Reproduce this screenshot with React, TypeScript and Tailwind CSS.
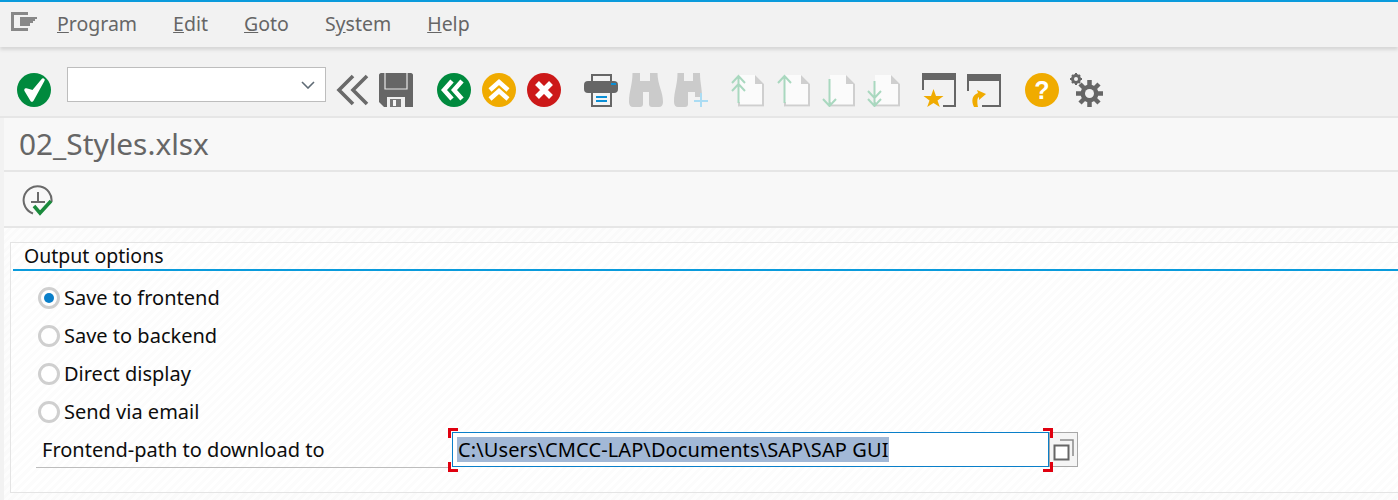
import React from "react";

const font = "font-['Noto_Sans','Open_Sans',sans-serif]";

function Svg({ children, className = "" }: { children: React.ReactNode; className?: string }) {
  return (
    <svg viewBox="0 0 34 34" className={`h-[34px] w-[34px] shrink-0 ${className}`}>
      {children}
    </svg>
  );
}

function Round({ fill, children, className }: { fill: string; children: React.ReactNode; className?: string }) {
  return (
    <Svg className={className}>
      <circle cx="17" cy="17" r="17" fill={fill} />
      {children}
    </Svg>
  );
}

const Doc = ({ children, className }: { children?: React.ReactNode; className?: string }) => (
  <Svg className={className}>
    <path d="M8 2h16l9 9v23H8z" fill="#fbfbfb" />
    <path d="M8 29v3.500h24V11" fill="none" stroke="#cfcfcf" strokeWidth="2" />
    <path d="M24 2l9 9h-9z" fill="#cfcfcf" />
    {children}
  </Svg>
);

function Toolbar() {
  const arrow = "#a9d8bf";
  return (
    <div className="flex h-[71px] items-center border-b-2 border-[#e6e6e6] pt-[14px] pl-[17px]">
      <Round fill="#008a3e" className="mt-[3px]">
        <path d="M9 17l6 10L26 7l-10 12z" fill="#fff" stroke="#fff" strokeWidth="3.500" strokeLinejoin="round" />
      </Round>
      <div className="mb-[8px] ml-4 flex h-[35px] w-[259px] items-center justify-end border border-[#bdbdbd] bg-white pr-[10px]">
        <svg viewBox="0 0 14 8" className="h-2 w-[14px]">
          <path d="M1 1l6 6 6-6" fill="none" stroke="#5f6b75" strokeWidth="1.6" />
        </svg>
      </div>
      <Svg className="mt-[3px] ml-[10px]">
        <path d="M17 3L3 17l14 14M31 3L17 17l14 14" fill="none" stroke="#6a6a6a" strokeWidth="3.6" />
      </Svg>
      <Svg className="mt-[3px] ml-[9px]">
        <path d="M0 2c0-1 1-2 2-2h30c1 0 2 1 2 2v32H5l-5-5z" fill="#666" />
        <path d="M6 0v16h22V0" fill="none" stroke="#e8e8e8" strokeWidth="1.2" />
        <path d="M8 24h18v10H8z" fill="#efefef" />
        <path d="M11 26h11v8H11z" fill="#777" />
        <path d="M14 27h3v6h-3z" fill="#f7f7f7" />
      </Svg>
      <Round fill="#008a3e" className="mt-[3px] ml-6">
        <path d="M15 8l-8 9 8 9M25 8l-8 9 8 9" fill="none" stroke="#fff" strokeWidth="4.500" />
      </Round>
      <Round fill="#f0ab00" className="mt-[3px] ml-[11px]">
        <path d="M8 17l9-8 9 8M8 26l9-8 9 8" fill="none" stroke="#fff" strokeWidth="4.500" />
      </Round>
      <Round fill="#cc1919" className="mt-[3px] ml-[11px]">
        <path d="M10 10l14 14M24 10L10 24" stroke="#fff" strokeWidth="5.500" />
      </Round>
      <Svg className="mt-[3px] ml-[23px]">
        <path d="M8 9V2h19v7" fill="none" stroke="#666" strokeWidth="2" />
        <rect x="0" y="8" width="34" height="12" rx="4" fill="#666" />
        <path d="M27 10h5v2h-5z" fill="#0a8fd6" />
        <path d="M8 20v13h19V20" fill="#f4f4f4" stroke="#666" strokeWidth="2" />
        <path d="M12 23h11v2H12zM12 27h11v2H12z" fill="#0a8fd6" />
      </Svg>
      <Svg className="mt-[3px] ml-[11px]">
        <path d="M3.500 0H11v8h10V0h7.500c0 12 5.500 18 5.500 29 0 3-1.500 5-4 5H23c-2 0-3-1-3-3V19h-6v12c0 2-1 3-3 3H4c-2.500 0-4-2-4-5C0 18 3.500 12 3.500 0z" fill="#cbcbcb" />
      </Svg>
      <Svg className="mt-[3px] ml-[11px]">
        <path d="M3.500 0H10v8h9V0h7c0 10 2 14 2 24h-7v-5h-7v12c0 2-1 3-3 3H4c-2.500 0-4-2-4-5C0 18 3.500 12 3.500 0z" fill="#cbcbcb" />
        <path d="M27 20v14M20 28h14" stroke="#abdcf3" strokeWidth="2" />
      </Svg>
      <Doc className="mt-[3px] ml-[23px]">
        <path d="M7.500 30V4M1 10l6.500-7 6.500 7M1 18l6.500-7 6.500 7" fill="none" stroke={arrow} strokeWidth="2" />
      </Doc>
      <Doc className="mt-[3px] ml-3">
        <path d="M7.500 30V3M1 10l6.500-7 6.500 7" fill="none" stroke={arrow} strokeWidth="2" />
      </Doc>
      <Doc className="mt-[3px] ml-[11px]">
        <path d="M7.500 6v27M1 26l6.500 7 6.500-7" fill="none" stroke={arrow} strokeWidth="2" />
      </Doc>
      <Doc className="mt-[3px] ml-[11px]">
        <path d="M7.500 8v25M1 18l6.500 7 6.500-7M1 26l6.500 7 6.500-7" fill="none" stroke={arrow} strokeWidth="2" />
      </Doc>
      <Svg className="mt-[3px] ml-[21px]">
        <path d="M0 0h34v7H0z" fill="#666" />
        <path d="M1 7v10M33 7v26H21" fill="none" stroke="#666" strokeWidth="2" />
        <path d="M11.500 16l2.500 7h7.500l-6 4.500 2.300 6.500-6.300-4-6.300 4 2.300-6.500-6-4.500H9z" fill="#f0ab00" />
      </Svg>
      <Svg className="mt-[3px] ml-[11px]">
        <path d="M0 1h34v7H0z" fill="#666" />
        <path d="M1 8v10M33 8v25H15" fill="none" stroke="#666" strokeWidth="2" />
        <path d="M7 34c-3-6-2-12 4-14l-1-3 9 4-7 6v-3c-2 1-2 5-1 10z" fill="#f0ab00" />
      </Svg>
      <Round fill="#f0ab00" className="mt-[3px] ml-6">
        <text x="17" y="26" textAnchor="middle" fontSize="25" fontWeight="700" fill="#fff" fontFamily="'Liberation Sans', sans-serif">?</text>
      </Round>
      <Svg className="mt-[3px] ml-[11px]">
        <circle cx="6" cy="6" r="3.500" fill="none" stroke="#666" strokeWidth="3" />
        <path d="M6 0v12M0 6h12M2 2l8 8M10 2l-8 8" stroke="#666" strokeWidth="2" />
        <circle cx="6" cy="6" r="2" fill="#f2f2f2" />
        <circle cx="19.500" cy="20.500" r="9" fill="#666" />
        <path d="M19.500 7v27M6 20.500h27M10 11l19 19M29 11L10 30" stroke="#666" strokeWidth="4.500" />
        <circle cx="19.500" cy="20.500" r="4.500" fill="#f2f2f2" />
      </Svg>
    </div>
  );
}

function Radio({ label, on = false }: { label: string; on?: boolean }) {
  return (
    <div className="flex h-[38px] items-center text-[20px] leading-none text-[#0d0d0d]">
      <span className="flex h-[22px] w-[22px] items-center justify-center rounded-full border-[3px] border-[#cfcfcf] bg-white">
        {on && <span className="h-[10px] w-[10px] rounded-full bg-[#0a7fc9]" />}
      </span>
      <span className="ml-[4px]">{label}</span>
    </div>
  );
}

const Corner = ({ className }: { className: string }) => (
  <span className={`absolute h-[10px] w-[10px] border-[#e0000f] ${className}`} />
);

export default function App() {
  return (
    <div className={`h-[500px] w-[1398px] overflow-hidden bg-[#f2f2f2] ${font}`}>
      <div className="h-[2px] bg-[#0a9bdc]" />
      <div className="relative flex h-[45px] items-center pb-[1px] text-[19.5px] text-[#666] shadow-[0_3px_3px_#d8d8d8]">
        <svg viewBox="0 0 26 19" className="mb-[5px] ml-[11px] h-[19px] w-[26px]">
          <path d="M17 1.500H1.500v16H17" fill="none" stroke="#888" strokeWidth="3" />
          <path d="M9 5h17v2h-2v2h-2v2h-3v3H9z" fill="#888" />
        </svg>
        <span className="ml-[20px]"><u>P</u>rogram</span>
        <span className="ml-9"><u>E</u>dit</span>
        <span className="ml-9"><u>G</u>oto</span>
        <span className="ml-9">S<u>y</u>stem</span>
        <span className="ml-9"><u>H</u>elp</span>
      </div>
      <Toolbar />
      <div className="ml-[4px] bg-[#f8f8f8]">
        <div className="flex h-[54px] items-center border-b-2 border-[#e6e6e6] pl-[15px] text-[29.800px] text-[#666]">
          02_Styles.xlsx
        </div>
        <div className="flex h-[56px] items-center border-b-2 border-[#e6e6e6] pl-[18px] pt-[4px]">
          <svg viewBox="0 0 32 32" className="h-8 w-8">
            <path d="M11 28.500A14 14 0 1 1 29.500 17" fill="none" stroke="#6a6a6a" strokeWidth="2" />
            <path d="M16 7v10M9 17h14" fill="none" stroke="#6a6a6a" strokeWidth="2" />
            <path d="M12 21l6 7 11-12" fill="none" stroke="#1a8a3c" strokeWidth="3.500" />
          </svg>
        </div>
      </div>
      <div className="ml-[4px] h-[272px] bg-[repeating-linear-gradient(135deg,#fdfdfd_0px,#fdfdfd_3px,#fafafa_3px,#fafafa_6px)] pt-[14px] pl-[6px]">
        <div className="h-[251px] border-y border-l border-[#e4e4e4] bg-[repeating-linear-gradient(135deg,#ffffff_0px,#ffffff_3px,#fcfcfc_3px,#fcfcfc_6px)] pl-[2px]">
          <div className="flex h-[28px] items-center border-b-2 border-[#0a9bdc] pl-[11px] text-[19.500px] leading-none text-[#0d0d0d]">
            Output options
          </div>
          <div className="pt-[8px] pl-[25px]">
            <Radio label="Save to frontend" on />
            <Radio label="Save to backend" />
            <Radio label="Direct display" />
            <Radio label="Send via email" />
          </div>
          <div className="mt-[1px] ml-[23px] flex items-start">
            <div className="flex h-[36px] w-[413px] items-center border-b border-[#bdbdbd] pl-[6px] text-[20px] leading-none text-[#0d0d0d]">
              Frontend-path to download to
            </div>
            <div className="relative ml-[3px] h-[35px] w-[597px] border border-[#0a7fc9] bg-white px-[4px] py-[4px]">
              <Corner className="-top-[5px] -left-[5px] border-t-[3px] border-l-[3px]" />
              <Corner className="-bottom-[6px] -left-[5px] border-b-[3px] border-l-[3px]" />
              <Corner className="-top-[5px] -right-[5px] border-t-[3px] border-r-[3px]" />
              <Corner className="-right-[5px] -bottom-[6px] border-r-[3px] border-b-[3px]" />
              <div className="flex h-[25px] w-[432px] items-center bg-[#a2b8d6] pl-[1px] text-[20px] leading-none tracking-[0.1px] text-black">
                C:\Users\CMCC-LAP\Documents\SAP\SAP GUI
              </div>
            </div>
            <div className="flex h-[35px] w-[29px] items-center justify-center border border-[#a8a8a8] bg-[#f5f5f5]">
              <svg viewBox="0 0 22 22" className="h-[22px] w-[22px]">
                <path d="M7 1h13v16" fill="none" stroke="#8a8a8a" strokeWidth="1.500" />
                <rect x="1.500" y="6.500" width="14" height="14" fill="#fff" stroke="#666" strokeWidth="2" />
              </svg>
            </div>
          </div>
        </div>
      </div>
    </div>
  );
}
